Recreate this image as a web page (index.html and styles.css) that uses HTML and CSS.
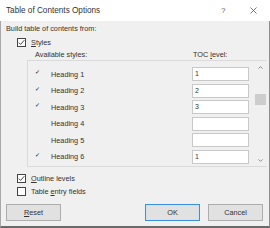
FILE: index.html
```html
<!DOCTYPE html>
<html lang="en">
<head>
    <meta charset="utf-8" />
    <title>Table of Contents Options</title>
    <link rel="stylesheet" href="styles.css">
</head>
<body>
    <div id="dialog">
        <div id="titlebar">
            <span class="title">Table of Contents Options</span>
            <span class="help">?</span>
            <svg class="close" width="7" height="7" viewBox="0 0 7 7"><path d="M0.5 0.5L6.5 6.5M6.5 0.5L0.5 6.5" stroke="#555" stroke-width="0.8" fill="none"/></svg>
        </div>
        <div id="content">
            <p class="build">Build table of contents from:</p>
            <label class="check first">
                <span class="box"><svg width="9" height="9" viewBox="0 0 9 9"><path d="M1.8 4.6L3.6 6.4L7.3 2.2" stroke="#333" stroke-width="0.9" fill="none"/></svg></span>
                <span><u>S</u>tyles</span>
            </label>
            <div class="heads">
                <span class="avail">Available styles:</span>
                <span class="toc">TOC <u>l</u>evel:</span>
            </div>
            <div id="list">
                <div class="rows">
                    <div class="row"><span class="tick">&#10003;</span><span class="name">Heading 1</span><span class="level">1</span></div>
                    <div class="row"><span class="tick">&#10003;</span><span class="name">Heading 2</span><span class="level">2</span></div>
                    <div class="row"><span class="tick">&#10003;</span><span class="name">Heading 3</span><span class="level">3</span></div>
                    <div class="row"><span class="tick"></span><span class="name">Heading 4</span><span class="level"></span></div>
                    <div class="row"><span class="tick"></span><span class="name">Heading 5</span><span class="level"></span></div>
                    <div class="row"><span class="tick">&#10003;</span><span class="name">Heading 6</span><span class="level">1</span></div>
                </div>
                <div class="scroll">
                    <svg width="5" height="3" viewBox="0 0 5 3"><path d="M0.5 2.6L2.5 0.6L4.5 2.6" stroke="#777" stroke-width="0.8" fill="none"/></svg>
                    <div class="track"><div class="thumb"></div></div>
                    <svg width="5" height="3" viewBox="0 0 5 3"><path d="M0.5 0.4L2.5 2.4L4.5 0.4" stroke="#777" stroke-width="0.8" fill="none"/></svg>
                </div>
            </div>
            <label class="check">
                <span class="box"><svg width="9" height="9" viewBox="0 0 9 9"><path d="M1.8 4.6L3.6 6.4L7.3 2.2" stroke="#333" stroke-width="0.9" fill="none"/></svg></span>
                <span><u>O</u>utline levels</span>
            </label>
            <label class="check">
                <span class="box"></span>
                <span>Table <u>e</u>ntry fields</span>
            </label>
            <div class="buttons">
                <button class="btn"><u>R</u>eset</button>
                <span class="spacer"></span>
                <button class="btn ok">OK</button>
                <button class="btn">Cancel</button>
            </div>
        </div>
    </div>
</body>
</html>
```

FILE: styles.css
```css
html, body {
    margin: 0;
    padding: 0;
}
body {
    width: 270px;
    height: 228px;
    overflow: hidden;
    font-family: "Liberation Sans", Arial, sans-serif;
    font-size: 7.3px;
    color: #333;
}
#dialog {
    width: 270px;
    height: 228px;
    background: #f0f0f0;
    display: flex;
    flex-direction: column;
}
#titlebar {
    height: 21px;
    background: #fff;
    display: flex;
    align-items: center;
    padding-left: 6px;
}
.title {
    font-size: 8.2px;
    flex: 1;
}
.help {
    font-size: 8px;
    color: #666;
    width: 29px;
}
.close {
    margin-right: 13px;
}
#content {
    flex: 1;
    border-left: 1px solid #a8a8a8;
    border-right: 1px solid #8c8c8c;
    border-bottom: 2px solid #6a6a6a;
    padding: 2px 0 0 5px;
    display: flex;
    flex-direction: column;
}
.build {
    margin: 0;
    line-height: 12px;
}
.check {
    display: flex;
    align-items: center;
    height: 13px;
    margin-left: 11px;
    gap: 5px;
}
.check.first {
    margin-top: 1px;
}
.box {
    width: 9px;
    height: 9px;
    box-sizing: border-box;
    border: 1px solid #444;
    background: #fff;
    position: relative;
}
.box svg {
    position: absolute;
    left: -1px;
    top: -1px;
}
.heads {
    display: flex;
    height: 11px;
    line-height: 11px;
    padding-left: 29px;
}
.avail {
    width: 158px;
}
#list {
    margin-left: 21px;
    width: 240px;
    height: 107px;
    box-sizing: border-box;
    border: 1px solid #dadada;
    border-right: none;
    display: flex;
}
.rows {
    padding-top: 5px;
    width: 225px;
}
.row {
    display: flex;
    align-items: center;
    height: 16.5px;
}
.tick {
    width: 16px;
    margin-left: 7px;
    font-size: 6px;
    color: #111;
    align-self: flex-start;
    margin-top: 2px;
}
.name {
    width: 141px;
}
.level {
    width: 57px;
    height: 14px;
    box-sizing: border-box;
    border: 1px solid #c8c8c8;
    background: #fff;
    line-height: 12px;
    padding-left: 2px;
    font-size: 7px;
}
.scroll {
    width: 12px;
    display: flex;
    flex-direction: column;
    align-items: center;
    padding-top: 5px;
    padding-bottom: 4px;
    margin-left: 1px;
}
.track {
    flex: 1;
    width: 11px;
}
.thumb {
    margin-top: 25px;
    height: 11px;
    background: #cdcdcd;
}
#list + .check {
    margin-top: 5px;
}
.buttons {
    display: flex;
    margin-top: 6px;
    gap: 8px;
    padding-right: 6px;
}
.spacer {
    flex: 1;
}
.btn {
    width: 55px;
    height: 17px;
    padding: 0;
    font-family: inherit;
    font-size: 7.3px;
    color: #333;
    background: #e1e1e1;
    border: 1px solid #adadad;
}
.btn.ok {
    border: 1px solid #3c8fdc;
    box-shadow: inset 0 0 0 1px #cfe3f7;
}
```
